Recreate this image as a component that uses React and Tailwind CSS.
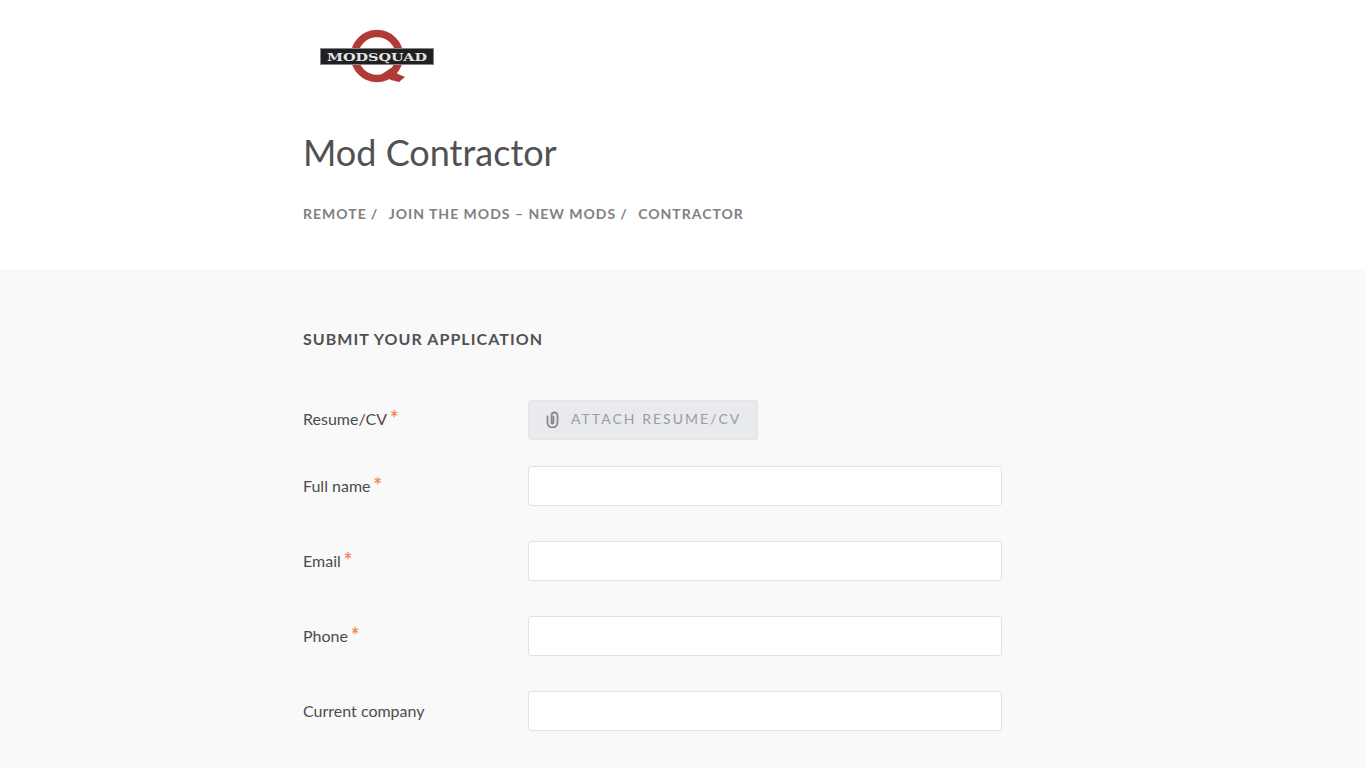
const Req = () => <span className="relative top-[1px] ml-[3px] text-[20px] font-bold leading-none text-[#f6875c]">*</span>;

function Logo() {
  return (
    <svg width="114" height="56" viewBox="0 0 114 56" className="block ml-[17px]">
      <circle cx="57" cy="28" r="22.5" fill="none" stroke="#b03a35" strokeWidth="7.5" />
      <path d="M71 40 L78 46 L85 49 L79 54 L71 52 L62 46 Z" fill="#b03a35" />
      <rect x="0.5" y="20.5" width="113" height="16" fill="#1f2022" stroke="#85858a" strokeWidth="1" />
      <text x="7" y="33" textLength="100" lengthAdjust="spacingAndGlyphs" fill="#e4e4e4" fontSize="11" fontWeight="700" fontFamily="'DejaVu Serif', serif">MODSQUAD</text>
    </svg>
  );
}

function Row({ label, required, className }) {
  return (
    <div className={`flex items-center ${className}`}>
      <label className="w-[225px] text-[16px] leading-[24px] text-[#4c4c4e]">
        {label}
        {required && <Req />}
      </label>
      <input className="h-[40px] w-[474px] rounded-[3px] border border-[#e2e2e2] bg-white" />
    </div>
  );
}

export default function App() {
  return (
    <div className="h-[768px] overflow-hidden bg-[#f9f9f9] font-['Lato',sans-serif]">
      <header className="h-[269px] bg-white">
        <div className="mx-auto w-[760px] pt-[28px]">
          <Logo />
          <h1 className="mt-[40px] text-[36px] leading-[56px] text-[#515154]">Mod Contractor</h1>
          <div className="mt-[24px] flex text-[14px] font-bold uppercase leading-[20px] tracking-[1px] text-[#808080]">
            <span>Remote</span>
            <span className="ml-[4px] mr-[10.5px]">/</span>
            <span>Join the Mods – New Mods</span>
            <span className="ml-[4px] mr-[10.5px]">/</span>
            <span>Contractor</span>
          </div>
        </div>
      </header>
      <section className="mx-auto w-[760px] pt-[59px]">
        <h4 className="text-[16px] font-bold uppercase leading-[22px] tracking-[1.06px] text-[#515154]">Submit your application</h4>
        <div className="mt-[50px] flex items-center">
          <label className="-mt-[2px] w-[225px] text-[16px] leading-[24px] text-[#4c4c4e]">
            Resume/CV
            <Req />
          </label>
          <button className="flex h-[40px] w-[230px] items-center rounded-[3px] border border-[#e2e4e8] bg-[#e9eaee] pb-[3px] pl-[17px] text-[14px] uppercase tracking-[2.04px] text-[#9a9ca2]">
            <svg width="13" height="17" viewBox="0 0 13 17" fill="none" stroke="#8a8a8c" strokeWidth="1.8" strokeLinecap="round" className="mr-[12px] mt-[2px]">
              <path d="M1.5 5.5v6a5 5 0 0 0 10 0V4.5a3 3 0 0 0-6 0v7a1 1 0 0 0 2 0V5.5" />
            </svg>
            Attach Resume/CV
          </button>
        </div>
        <Row label="Full name" required className="mt-[26px]" />
        <Row label="Email" required className="mt-[35px]" />
        <Row label="Phone" required className="mt-[35px]" />
        <Row label="Current company" className="mt-[35px]" />
      </section>
    </div>
  );
}
